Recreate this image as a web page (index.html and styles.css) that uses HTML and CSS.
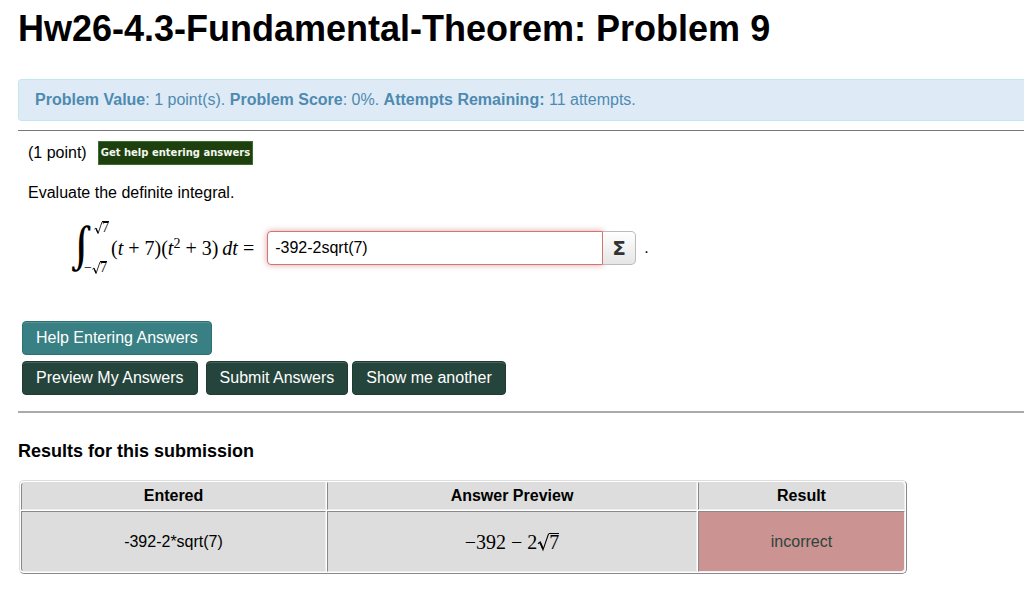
FILE: index.html
```html
<!DOCTYPE html>
<html lang="en">
<head>
    <meta charset="UTF-8">
    <meta name="viewport" content="width=device-width, initial-scale=1.0">
    <title>Hw26-4.3-Fundamental-Theorem: Problem 9</title>
    <link rel="stylesheet" href="styles.css">
</head>
<body>
    <h1>Hw26-4.3-Fundamental-Theorem: Problem 9</h1>
    <div class="score-info">
        <b>Problem Value</b>: 1 point(s). <b>Problem Score</b>: 0%. <b>Attempts Remaining:</b> 11 attempts.
    </div>

    <form class="problem-form">
        <div class="problem">
            <div class="points">
                <span>(1 point)</span>
                <a class="help-link" href="#">Get help entering answers</a>
            </div>
            <p>Evaluate the definite integral.</p>
            <div class="equation">
                <label class="math" for="answer">
                    <span class="integral">∫</span>
                    <span class="limits">
                        <span class="upper"><span class="root"><svg viewBox="0 0 10 16"><path d="M0.5 9.5 L2.5 8 L5 15 L10 0.5"/><path class="thick" d="M2.5 8.5 L5 14"/></svg><span>7</span></span></span>
                        <span class="lower">−<span class="root"><svg viewBox="0 0 10 16"><path d="M0.5 9.5 L2.5 8 L5 15 L10 0.5"/><path class="thick" d="M2.5 8.5 L5 14"/></svg><span>7</span></span></span>
                    </span>
                    <span class="integrand">(<i>t</i> + 7)(<i>t</i><sup>2</sup> + 3)&thinsp;<i>dt</i> =</span>
                </label>
                <div class="answer-group">
                    <input type="text" id="answer" value="-392-2sqrt(7)">
                    <button type="button" class="sigma" aria-label="Equation editor">Σ</button>
                </div>
                <span class="period">.</span>
            </div>
        </div>

        <div class="buttons">
            <button type="button" class="btn help">Help Entering Answers</button>
        </div>
        <div class="buttons">
            <button type="button" class="btn preview">Preview My Answers</button>
            <button type="button" class="btn">Submit Answers</button>
            <button type="button" class="btn">Show me another</button>
        </div>
    </form>

    <h2>Results for this submission</h2>
    <table class="results">
        <thead>
            <tr>
                <th class="entered">Entered</th>
                <th class="answer-preview">Answer Preview</th>
                <th>Result</th>
            </tr>
        </thead>
        <tbody>
            <tr>
                <td>-392-2*sqrt(7)</td>
                <td class="preview-math">−392 − 2<span class="root"><svg viewBox="0 0 10 16"><path d="M0.5 9.5 L2.5 8 L5 15 L10 0.5"/><path class="thick" d="M2.5 8.5 L5 14"/></svg><span>7</span></span></td>
                <td class="incorrect">incorrect</td>
            </tr>
        </tbody>
    </table>
</body>
</html>
```
FILE: styles.css
```css
* { box-sizing: border-box; }
body { margin: 0; padding: 9px 0 15px 18px; background: #fff; color: #000; font-family: "Liberation Sans", Arial, sans-serif; font-size: 16px; line-height: 20px; }
h1 { margin: 0 0 30px; font-size: 36px; line-height: 40px; }
h2 { margin: 28px 0 19px; font-size: 18px; line-height: 20px; }
.score-info { padding: 10px 16px; border: 1px solid #c3e7ef; border-right: none; border-radius: 4px 0 0 4px; background: #deebf7; color: #4e8ab0; }

.problem-form { margin-top: 9px; border-top: 1px solid #777; border-bottom: 2px solid #aaa; padding-bottom: 16px; }
.problem { padding: 10px; margin-bottom: 34px; }
.points { display: flex; align-items: center; gap: 11px; height: 24px; }
.help-link { padding: 0 2px; border: 1px solid #38702f; background: #1d400e; color: #f4f7ee; font-family: "DejaVu Sans", sans-serif; font-size: 10px; font-weight: bold; line-height: 22px; text-decoration: none; }
.problem p { margin: 18px 0 16px; }

.equation { display: flex; align-items: center; padding-left: 41px; height: 58px; }
.math { display: flex; align-items: center; font-family: "Liberation Serif", "Times New Roman", serif; font-size: 20px; white-space: nowrap; }
.integral { font-family: "DejaVu Math TeX Gyre", "DejaVu Sans", sans-serif; font-size: 42px; line-height: 54px; }
.limits { display: flex; flex-direction: column; justify-content: space-between; height: 56px; margin-left: -10px; font-size: 14px; line-height: 16px; }
.upper { padding-left: 10px; }
.integrand { padding-left: 2px; }
.integrand sup { font-size: 14px; line-height: 0; vertical-align: 7px; }
.root { display: inline-flex; align-items: baseline; }
.root svg { align-self: flex-start; width: 8px; height: 14px; fill: none; stroke: #000; stroke-width: 1; overflow: visible; }
.root .thick { stroke-width: 1.6; }
.root span { border-top: 1px solid #000; line-height: 12px; }

.answer-group { display: flex; flex: 0 0 369px; margin-left: 13px; }
.answer-group input { flex: 1; min-width: 0; height: 34px; padding: 4px 7px; border: 1px solid #cf7573; border-radius: 4px 0 0 4px; background: #fff; color: #000; box-shadow: 0 0 6px #dfa09f; font-family: inherit; font-size: 16px; }
.sigma { width: 33px; padding: 0; border: 1px solid #bbb; border-left: none; border-radius: 0 5px 5px 0; background: linear-gradient(#fff, #e6e6e6); color: #333; font-family: "DejaVu Sans", sans-serif; font-size: 20px; font-weight: bold; }
.period { margin-left: 8px; }

.buttons { display: flex; gap: 4px; padding-left: 4px; margin-top: 6px; }
.btn { height: 34px; padding: 0 13px; border: 1px solid #203a33; border-radius: 4px; background: #25453c; color: #fff; box-shadow: inset 0 1px 0 #466158; font-family: inherit; font-size: 16px; }
.btn.help { border-color: #2f6f71; background: #388083; box-shadow: inset 0 1px 0 #559496; }
.btn.preview { margin-right: 4px; }

.results { width: 888px; max-width: 100%; margin-left: 1px; border: 1px solid; border-color: #ddd #888 #888 #ddd; border-radius: 5px; border-spacing: 1px; background: #fff; text-align: center; }
.results th, .results td { padding: 3px; border: 1px solid; border-color: #888 #eee #eee #888; background: #ddd; }
.results th { height: 28px; border-top-color: #ddd; }
.results td { height: 61px; }
.results th:first-child { border-top-left-radius: 4px; }
.results th:last-child { border-top-right-radius: 4px; }
.results td:first-child { border-bottom-left-radius: 4px; }
.results td:last-child { border-bottom-right-radius: 4px; }
.entered { width: 305px; }
.answer-preview { width: 370px; }
.results .preview-math { font-family: "Liberation Serif", "Times New Roman", serif; font-size: 20px; }
.preview-math .root svg { width: 12px; height: 18px; }
.preview-math .root span { line-height: 16px; }
.results .incorrect { background: #cb9391; color: #2b453d; }
```
